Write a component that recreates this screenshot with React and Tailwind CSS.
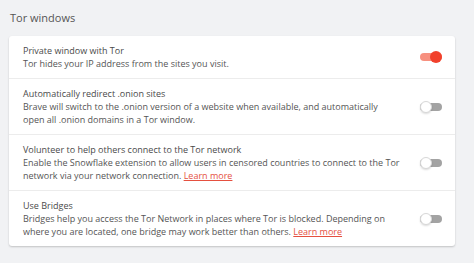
import React from "react";

function Toggle({ on }) {
  return (
    <div className="relative w-[22px] h-[12px] shrink-0 flex items-center">
      <div className={"w-full h-[8px] rounded-full " + (on ? "bg-[#f7907f]" : "bg-[#a3a3a3]")} />
      <div
        className={
          "absolute top-0 w-[12px] h-[12px] rounded-full " +
          (on ? "right-0 bg-[#f1412c]" : "left-0 bg-white border border-[#d8d8d8] shadow-[0_1px_2px_rgba(0,0,0,0.15)]")
        }
      />
    </div>
  );
}

function Link() {
  return <span className="text-[#e5503f] underline">Learn more</span>;
}

function Row({ title, children, on, last }) {
  return (
    <div className={"flex items-center pl-[14px] pr-[13px] py-2 " + (last ? "" : "border-b border-[#ececec]")}>
      <div className="w-[384px] text-[9px] leading-[13px]">
        <div className="text-[#4a4a4a]">{title}</div>
        <div className="text-[#555]">{children}</div>
      </div>
      <div className="flex-1 flex justify-end">
        <Toggle on={on} />
      </div>
    </div>
  );
}

export default function App() {
  return (
    <div className="w-[474px] h-[263px] bg-[#f1f2f4] pt-[10px] pl-[9px] pr-[19px]" style={{ fontFamily: '"Open Sans", sans-serif' }}>
      <div className="pl-px text-[11px] leading-[16px] text-[#555] h-[26px]">Tor windows</div>
      <div className="bg-white rounded-[3px] shadow-[0_1px_2px_rgba(0,0,0,0.2)]">
        <Row title="Private window with Tor" on>
          Tor hides your IP address from the sites you visit.
        </Row>
        <Row title="Automatically redirect .onion sites">
          Brave will switch to the .onion version of a website when available, and automatically
          <br />
          open all .onion domains in a Tor window.
        </Row>
        <Row title="Volunteer to help others connect to the Tor network">
          Enable the Snowflake extension to allow users in censored countries to connect to the Tor network via your network connection. <Link />
        </Row>
        <Row title="Use Bridges" last>
          Bridges help you access the Tor Network in places where Tor is blocked. Depending on where you are located, one bridge may work better than others. <Link />
        </Row>
      </div>
    </div>
  );
}
